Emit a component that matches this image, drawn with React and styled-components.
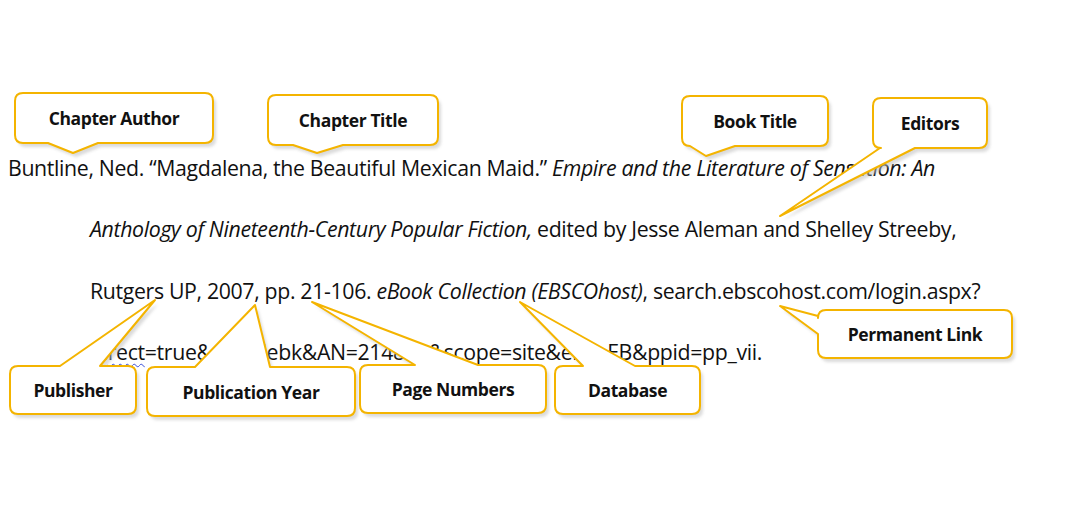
import React from "react";
import styled, { createGlobalStyle } from "styled-components";

const Global = createGlobalStyle`
  html, body { margin: 0; padding: 0; background: #fff; }
  body { width: 1068px; height: 517px; overflow: hidden; }
`;

const Page = styled.div`
  position: relative;
  width: 1068px;
  height: 517px;
  background: #fff;
  font-family: "Open Sans", "Liberation Sans", sans-serif;
  color: #111;
`;

const Citation = styled.div`
  display: flex;
  flex-direction: column;
  padding-top: 137px;
  font-size: 21.3px;
  letter-spacing: -0.35px;
`;

const Line = styled.div`
  height: 61.3px;
  line-height: 61.3px;
  white-space: nowrap;
  padding-left: ${(p) => (p.$first ? 8 : 90)}px;
`;

const Squiggle = styled.span`
  text-decoration: underline wavy #3b4fd8;
  text-decoration-thickness: 1px;
  text-underline-offset: 3px;
`;

const Layer = styled.svg`
  position: absolute;
  left: 0;
  top: 0;
  pointer-events: none;
  overflow: visible;
`;

const Label = styled.div`
  position: absolute;
  display: flex;
  align-items: center;
  justify-content: center;
  font-family: "Open Sans", "Liberation Sans", sans-serif;
  font-weight: 700;
  font-size: 17.5px;
  letter-spacing: -0.4px;
  color: #111;
  pointer-events: none;
`;

function calloutPath({ x, y, w, h, side, a, b, tip }) {
  const r = 8;
  const R = x + w, B = y + h;
  let d = `M${x + r},${y}`;
  if (side === "top") d += ` L${a},${y} L${tip[0]},${tip[1]} L${b},${y}`;
  d += ` L${R - r},${y} Q${R},${y} ${R},${y + r} L${R},${B - r} Q${R},${B} ${R - r},${B}`;
  if (side === "bottom") d += ` L${b},${B} L${tip[0]},${tip[1]} L${a},${B}`;
  d += ` L${x + r},${B} Q${x},${B} ${x},${B - r}`;
  if (side === "left") d += ` L${x},${b} L${tip[0]},${tip[1]} L${x},${a}`;
  d += ` L${x},${y + r} Q${x},${y} ${x + r},${y} Z`;
  return d;
}

function Callout(props) {
  const { x, y, w, h, text } = props;
  const d = calloutPath(props);
  return (
    <>
      <Layer width="1068" height="517">
        <path d={d} fill="#bdbdbd" opacity="0.55" transform="translate(3,4)" style={{ filter: "blur(1.5px)" }} />
        <path d={d} fill="#fff" stroke="#f4b400" strokeWidth="2" strokeLinejoin="round" />
      </Layer>
      <Label style={{ left: x, top: y, width: w, height: h }}>{text}</Label>
    </>
  );
}

const callouts = [
  { text: "Chapter Author", x: 15, y: 93, w: 198, h: 50, side: "bottom", a: 48, b: 98, tip: [73, 153] },
  { text: "Chapter Title", x: 268, y: 95, w: 170, h: 50, side: "bottom", a: 293, b: 343, tip: [317, 153] },
  { text: "Book Title", x: 682, y: 96, w: 146, h: 50, side: "bottom", a: 690, b: 735, tip: [706, 156] },
  { text: "Editors", x: 873, y: 98, w: 114, h: 50, side: "bottom", a: 880, b: 915, tip: [780, 216] },
  { text: "Permanent Link", x: 818, y: 310, w: 194, h: 48, side: "left", a: 316, b: 334, tip: [780, 306] },
  { text: "Publisher", x: 10, y: 366, w: 126, h: 48, side: "top", a: 60, b: 100, tip: [155, 300] },
  { text: "Publication Year", x: 147, y: 367, w: 208, h: 49, side: "top", a: 195, b: 270, tip: [255, 305] },
  { text: "Page Numbers", x: 360, y: 365, w: 186, h: 48, side: "top", a: 415, b: 478, tip: [312, 302] },
  { text: "Database", x: 555, y: 366, w: 145, h: 48, side: "top", a: 583, b: 635, tip: [520, 302] },
];

export default function App() {
  return (
    <Page>
      <Global />
      <Citation>
        <Line $first>
          Buntline, Ned. “Magdalena, the Beautiful Mexican Maid.” <i>Empire and the Literature of Sensation: An</i>
        </Line>
        <Line>
          <i>Anthology of Nineteenth-Century Popular Fiction,</i> edited by Jesse Aleman and Shelley Streeby,
        </Line>
        <Line>
          Rutgers UP, 2007, pp. 21-106. <i>eBook Collection (EBSCOhost)</i>, search.ebscohost.com/login.aspx?
        </Line>
        <Line>
          di<Squiggle>rect</Squiggle>=true&amp;db=nlebk&amp;AN=214830&amp;scope=site&amp;ebv=EB&amp;ppid=pp_vii.
        </Line>
      </Citation>
      {callouts.map((c) => (
        <Callout key={c.text} {...c} />
      ))}
    </Page>
  );
}
